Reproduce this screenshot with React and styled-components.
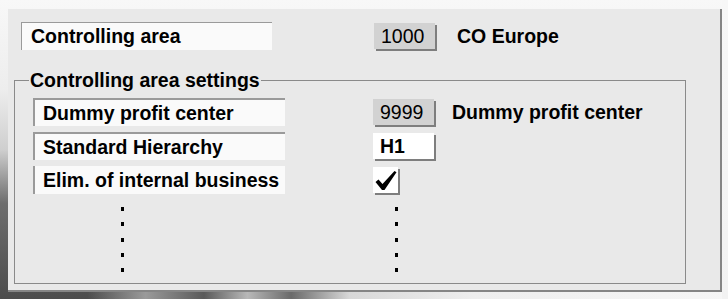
import React from 'react'
import styled, { createGlobalStyle } from 'styled-components'

const GlobalStyle = createGlobalStyle`
  html, body {
    margin: 0;
    height: 100%;
  }
  body {
    font-family: "Liberation Sans", Arial, sans-serif;
    overflow: hidden;
    background:
      linear-gradient(to bottom, #f7f7f7, #f2f2f2) right top / 6px 100% no-repeat,
      linear-gradient(to right, rgba(0,0,0,0) 0%, rgba(0,0,0,0) 12%, #9a9a9a 20%, #5a5a5a 28%, #b8b8b8 34%, #6a6a6a 40%, #d8d8d8 48%, #eeeeee 65%, #f6f6f6 100%) left bottom / 100% 8px no-repeat,
      linear-gradient(to bottom, #f8f8f8 0%, #ededed 30%, #cfcfcf 50%, #6e6e6e 68%, #4c4c4c 100%);
  }
`

const Panel = styled.div`
  box-sizing: border-box;
  width: 714px;
  height: 283px;
  margin: 9px 0 0 8px;
  padding: 13px 0 0 6px;
  background: #e9e9e9;
  border-right: 2px solid #858585;
  border-bottom: 2px solid #858585;
  display: flex;
  flex-direction: column;
`

const Row = styled.div`
  display: flex;
  align-items: center;
  height: 28px;
  margin-left: ${p => p.$indent || 0}px;
`

const Label = styled.div`
  box-sizing: border-box;
  width: ${p => p.$w}px;
  height: 28px;
  display: flex;
  align-items: center;
  padding-left: ${p => p.$pad}px;
  background: #fafafa;
  border-left: ${p => p.$bw}px solid #9a9a9a;
  border-top: ${p => (p.$noTop ? 0 : p.$bw)}px solid #9a9a9a;
  font-size: 19.5px;
  font-weight: bold;
  color: #000;
  white-space: nowrap;
`

const Value = styled.div`
  box-sizing: border-box;
  width: 61px;
  height: 26px;
  margin-left: ${p => p.$gap}px;
  display: flex;
  align-items: center;
  padding-left: 7px;
  background: ${p => (p.$white ? '#ffffff' : '#d2d2d2')};
  box-shadow: 2px 2px 0 #7e7e7e;
  font-size: 19.5px;
  font-weight: ${p => (p.$bold ? 'bold' : 'normal')};
  color: #000;
`

const Check = styled.div`
  box-sizing: border-box;
  width: 25px;
  height: 26px;
  margin-left: ${p => p.$gap}px;
  display: flex;
  align-items: center;
  justify-content: center;
  background: #ffffff;
  box-shadow: 2px 2px 0 #7e7e7e;
`

const Name = styled.div`
  margin-left: ${p => p.$gap}px;
  font-size: 19.5px;
  font-weight: bold;
  color: #000;
  white-space: nowrap;
`

const Group = styled.fieldset`
  box-sizing: border-box;
  width: 672px;
  height: 215px;
  margin: 19px 0 0 0;
  padding: 7px 0 0 18px;
  border: 1px solid #8a8a8a;
  display: flex;
  flex-direction: column;
  gap: 6px;
`

const Legend = styled.legend`
  margin-left: -4px;
  padding: 0 1px;
  font-size: 19.5px;
  font-weight: bold;
  line-height: 22px;
  color: #000;
`

const DotsRow = styled.div`
  display: flex;
  margin-top: 7px;
`

const Dots = styled.div`
  display: flex;
  flex-direction: column;
  gap: 11.3px;
  margin-left: ${p => p.$gap}px;
`

const Dot = styled.span`
  display: block;
  width: 3px;
  height: 4px;
  background: #000;
`

function DotColumn({ gap }) {
  return (
    <Dots $gap={gap}>
      {[0, 1, 2, 3, 4].map(i => <Dot key={i} />)}
    </Dots>
  )
}

function CheckMark() {
  return (
    <svg width="22" height="21" viewBox="0 0 22 21">
      <path d="M0.5 12 L3.5 9.5 L7.5 14 L19.5 1 L21.5 2.2 L9.5 20 L7 20 Z" fill="#000" />
    </svg>
  )
}

export default function App() {
  return (
    <>
      <GlobalStyle />
      <Panel>
        <Row $indent={7}>
          <Label $w={251} $pad={9} $bw={1}>Controlling area</Label>
          <Value $gap={102}>1000</Value>
          <Name $gap={22}>CO Europe</Name>
        </Row>
        <Group>
          <Legend>Controlling area settings</Legend>
          <Row>
            <Label $w={252} $pad={8} $bw={2}>Dummy profit center</Label>
            <Value $gap={88}>9999</Value>
            <Name $gap={18}>Dummy profit center</Name>
          </Row>
          <Row>
            <Label $w={252} $pad={8} $bw={2}>Standard Hierarchy</Label>
            <Value $gap={88} $white $bold>H1</Value>
          </Row>
          <Row>
            <Label $w={252} $pad={8} $bw={2} $noTop>Elim. of internal business</Label>
            <Check $gap={88}><CheckMark /></Check>
          </Row>
          <DotsRow>
            <DotColumn gap={88} />
            <DotColumn gap={271} />
          </DotsRow>
        </Group>
      </Panel>
    </>
  )
}
